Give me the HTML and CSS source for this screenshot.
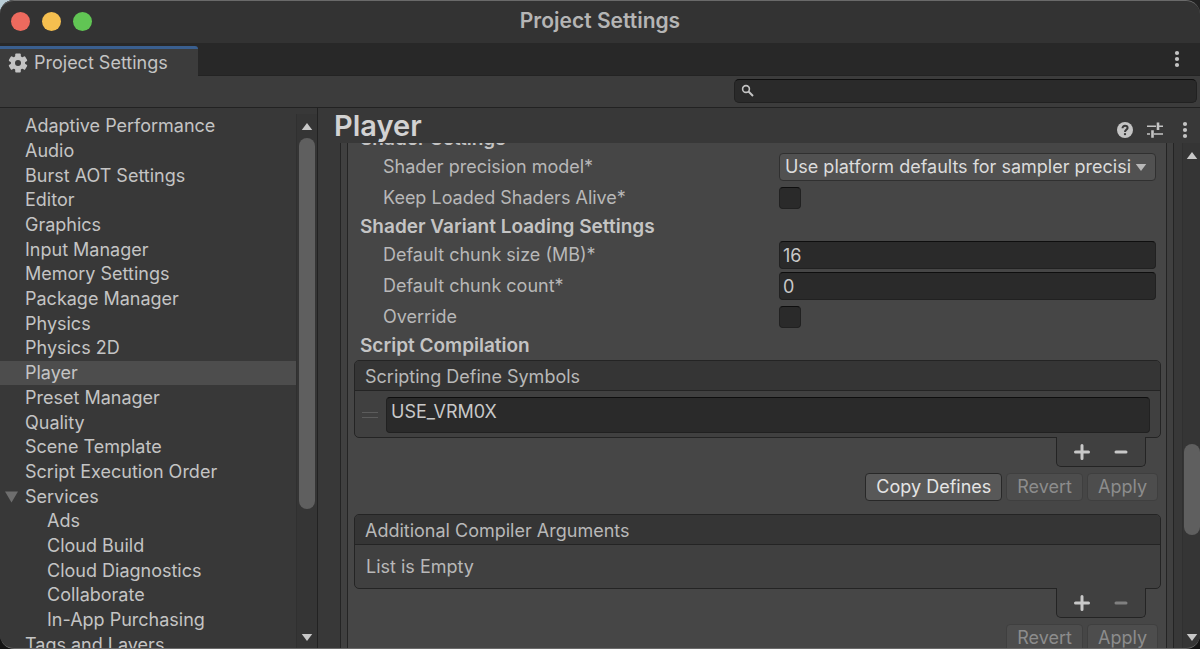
FILE: index.html
```html
<!DOCTYPE html>
<html lang="en">
<head>
<meta charset="utf-8">
<title>Project Settings</title>
<link rel="stylesheet" href="styles.css">
</head>
<body>
<div class="window">
  <header class="titlebar">
    <div class="lights">
      <button class="light light-close" aria-label="Close"></button>
      <button class="light light-min" aria-label="Minimize"></button>
      <button class="light light-zoom" aria-label="Zoom"></button>
    </div>
    <h1 class="window-title">Project Settings</h1>
  </header>

  <div class="tabbar">
    <button class="tab">
      <svg class="gear" viewBox="0 0 20 20" aria-hidden="true">
        <g fill="currentColor">
          <rect x="7.2" y="0.6" width="5.6" height="18.8" rx="1"/>
          <rect x="7.2" y="0.6" width="5.6" height="18.8" rx="1" transform="rotate(60 10 10)"/>
          <rect x="7.2" y="0.6" width="5.6" height="18.8" rx="1" transform="rotate(120 10 10)"/>
          <circle cx="10" cy="10" r="7.2"/>
        </g>
        <circle class="gear-hole" cx="10" cy="10" r="3"/>
      </svg>
      Project Settings
    </button>
    <button class="icon-button tab-menu" aria-label="Tab menu">
      <svg class="dots" viewBox="0 0 6 18" fill="currentColor"><circle cx="3" cy="3" r="2.1"/><circle cx="3" cy="9" r="2.1"/><circle cx="3" cy="15" r="2.1"/></svg>
    </button>
  </div>

  <div class="toolbar">
    <label class="search">
      <svg class="search-icon" viewBox="0 0 14 14" fill="none" stroke="currentColor"><circle cx="5" cy="5" r="3.4" stroke-width="1.6"/><path d="M7.5 7.5 12 12" stroke-width="2"/></svg>
      <input class="search-input" type="text" aria-label="Search settings">
    </label>
  </div>

  <div class="body">
    <nav class="sidebar">
      <ul class="tree">
        <li class="item">Adaptive Performance</li>
        <li class="item">Audio</li>
        <li class="item">Burst AOT Settings</li>
        <li class="item">Editor</li>
        <li class="item">Graphics</li>
        <li class="item">Input Manager</li>
        <li class="item">Memory Settings</li>
        <li class="item">Package Manager</li>
        <li class="item">Physics</li>
        <li class="item">Physics 2D</li>
        <li class="item selected">Player</li>
        <li class="item">Preset Manager</li>
        <li class="item">Quality</li>
        <li class="item">Scene Template</li>
        <li class="item">Script Execution Order</li>
        <li class="item parent"><svg class="foldout" viewBox="0 0 14 12" fill="currentColor"><path d="M0 0h14L7 12z"/></svg>Services</li>
        <li class="item child">Ads</li>
        <li class="item child">Cloud Build</li>
        <li class="item child">Cloud Diagnostics</li>
        <li class="item child">Collaborate</li>
        <li class="item child">In-App Purchasing</li>
        <li class="item">Tags and Layers</li>
      </ul>
      <div class="scrollbar side-scroll">
        <svg class="arrow" viewBox="0 0 12 8" fill="currentColor"><path d="M6 0l6 8H0z"/></svg>
        <div class="track"><div class="thumb"></div></div>
        <svg class="arrow" viewBox="0 0 12 8" fill="currentColor"><path d="M0 0h12L6 8z"/></svg>
      </div>
    </nav>

    <main class="panel">
      <div class="panel-head">
        <h2 class="panel-title">Player</h2>
        <div class="panel-actions">
          <button class="icon-button" aria-label="Help">
            <svg class="action-icon" viewBox="0 0 16 16"><circle cx="8" cy="8" r="8" fill="currentColor"/><path class="help-mark" d="M5.5 6.3C5.5 4.6 6.6 3.8 8 3.8s2.6.9 2.6 2.2C10.6 7.7 8 7.7 8 9.9"/><circle class="help-dot" cx="8" cy="12.1" r="1.2"/></svg>
          </button>
          <button class="icon-button" aria-label="Presets">
            <svg class="action-icon" viewBox="0 0 16 16" fill="none" stroke="currentColor"><path d="M0 4.2h9M12 4.2h4M0 12h3M7 12h9" stroke-width="1.4"/><path d="M11 .5V8M5.5 8.2v7.5" stroke-width="2.6"/></svg>
          </button>
          <button class="icon-button panel-menu" aria-label="More options">
            <svg class="dots" viewBox="0 0 6 18" fill="currentColor"><circle cx="3" cy="3" r="2.1"/><circle cx="3" cy="9" r="2.1"/><circle cx="3" cy="15" r="2.1"/></svg>
          </button>
        </div>
      </div>

      <div class="panel-body">
        <div class="frame">
          <div class="settings">
            <h3 class="group">Shader Settings</h3>
            <div class="row">
              <label for="precision">Shader precision model*</label>
              <div class="select-wrap">
                <select id="precision" class="select"><option>Use platform defaults for sampler precision</option></select>
                <svg class="caret" viewBox="0 0 12 8" fill="currentColor"><path d="M0 0h12L6 8z"/></svg>
              </div>
            </div>
            <div class="row">
              <label for="alive">Keep Loaded Shaders Alive*</label>
              <input id="alive" class="check" type="checkbox">
            </div>
            <h3 class="group">Shader Variant Loading Settings</h3>
            <div class="row">
              <label for="size">Default chunk size (MB)*</label>
              <input id="size" class="field" type="text" value="16">
            </div>
            <div class="row">
              <label for="count">Default chunk count*</label>
              <input id="count" class="field" type="text" value="0">
            </div>
            <div class="row">
              <label for="override">Override</label>
              <input id="override" class="check" type="checkbox">
            </div>
            <h3 class="group">Script Compilation</h3>

            <section class="list">
              <div class="list-box">
                <h4 class="list-head">Scripting Define Symbols</h4>
                <div class="list-row">
                  <span class="grip"></span>
                  <textarea class="field symbol" rows="1" aria-label="Define symbol">USE_VRM0X</textarea>
                </div>
              </div>
              <div class="list-foot">
                <button class="icon-button" aria-label="Add symbol"><svg class="sign" viewBox="0 0 16 16"><path d="M8 1.5v13M1.5 8h13"/></svg></button>
                <button class="icon-button" aria-label="Remove symbol"><svg class="sign" viewBox="0 0 16 16"><path d="M3 8h10"/></svg></button>
              </div>
              <div class="buttons">
                <button class="button">Copy Defines</button>
                <button class="button" disabled>Revert</button>
                <button class="button" disabled>Apply</button>
              </div>
            </section>

            <section class="list">
              <div class="list-box">
                <h4 class="list-head">Additional Compiler Arguments</h4>
                <p class="list-empty">List is Empty</p>
              </div>
              <div class="list-foot">
                <button class="icon-button" aria-label="Add argument"><svg class="sign" viewBox="0 0 16 16"><path d="M8 1.5v13M1.5 8h13"/></svg></button>
                <button class="icon-button" aria-label="Remove argument" disabled><svg class="sign" viewBox="0 0 16 16"><path d="M3 8h10"/></svg></button>
              </div>
              <div class="buttons">
                <button class="button" disabled>Revert</button>
                <button class="button" disabled>Apply</button>
              </div>
            </section>
          </div>
        </div>
        <div class="scrollbar main-scroll">
          <svg class="arrow" viewBox="0 0 12 8" fill="currentColor"><path d="M6 0l6 8H0z"/></svg>
          <div class="track"><div class="thumb"></div></div>
          <svg class="arrow" viewBox="0 0 12 8" fill="currentColor"><path d="M0 0h12L6 8z"/></svg>
        </div>
      </div>
    </main>
  </div>
</div>
</body>
</html>
```
FILE: styles.css
```css
* { box-sizing: border-box; }

body {
  margin: 0;
  background: linear-gradient(90deg, #b9cdd6 0 50%, #222 50%) top / 100% 50% no-repeat #141414;
  color: #c4c4c4;
  font: 18px/24px Inter, "Liberation Sans", sans-serif;
  font-optical-sizing: none;
}

h1, h2, h3, h4, p, ul { margin: 0; padding: 0; font-size: inherit; font-weight: 400; }
button, input, select, textarea { margin: 0; font: inherit; font-optical-sizing: none; color: inherit; }
button { padding: 0; border: 0; background: none; }
svg { display: block; flex: none; }

.window {
  position: relative;
  display: flex;
  flex-direction: column;
  height: 100vh;
  overflow: hidden;
  border-radius: 14px;
  background: #383838;
}
.window::after {
  content: "";
  position: absolute;
  inset: 0;
  border: solid #6a6a6a;
  border-width: 1px 0;
  border-radius: 14px;
  pointer-events: none;
}

/* Title bar */
.titlebar {
  display: grid;
  grid-template-columns: 1fr auto 1fr;
  align-items: center;
  height: 43px;
  flex: none;
  background: #333;
}
.lights { display: flex; gap: 12px; padding-left: 11px; }
.light { width: 19px; height: 19px; border-radius: 50%; }
.light-close { background: #ed6a5e; }
.light-min { background: #f5bf4f; }
.light-zoom { background: #61c554; }
.window-title { padding-bottom: 2px; color: #b5b5b5; font-size: 21px; font-weight: 600; }

/* Tabs */
.tabbar {
  display: flex;
  justify-content: space-between;
  height: 33px;
  flex: none;
  padding-top: 3px;
  background: #282828;
  border-bottom: 1px solid #232323;
}
.tab {
  display: flex;
  align-items: center;
  gap: 6px;
  height: 30px;
  padding: 0 30px 0 8px;
  border-top: 3px solid #3a5f8f;
  border-top-right-radius: 3px;
  background: #3c3c3c;
}
.gear { width: 20px; height: 20px; }
.gear-hole { fill: #3c3c3c; }
.dots { width: 6px; height: 18px; }
.icon-button { display: flex; align-items: center; justify-content: center; }
.tab-menu { padding: 0 20px 4px; }

/* Search */
.toolbar {
  display: flex;
  justify-content: flex-end;
  height: 32px;
  flex: none;
  padding: 3px 3px 4px;
  background: #3c3c3c;
  border-bottom: 1px solid #222;
}
.search {
  display: flex;
  align-items: center;
  gap: 6px;
  width: 463px;
  padding: 0 6px;
  border: 1px solid #212121;
  border-top-color: #0e0e0e;
  border-radius: 5px;
  background: #2a2a2a;
}
.search-icon { width: 14px; height: 14px; }
.search-input { flex: 1; min-width: 0; height: 20px; padding: 0; border: 0; background: none; outline: 0; }

.body { display: flex; flex: 1; min-height: 0; }

/* Sidebar */
.sidebar { display: flex; width: 318px; flex: none; border-right: 1px solid #222; }
.tree {
  display: grid;
  grid-template-rows: repeat(22, minmax(24px, 1fr));
  flex: 1;
  margin: 6px 0 -8px;
  list-style: none;
}
.item { display: flex; align-items: center; padding-left: 25px; white-space: nowrap; }
.selected { background: #4d4d4d; }
.parent { gap: 7px; padding-left: 5px; }
.foldout { width: 13px; height: 12px; color: #6e6e6e; }
.child { padding-left: 47px; }

/* Scrollbars */
.scrollbar {
  display: flex;
  flex-direction: column;
  align-items: center;
  gap: 8px;
  flex: none;
  background: #353535;
  border-left: 1px solid #303030;
}
.arrow { width: 12px; height: 7px; color: #c8c8c8; }
.track { flex: 1; width: 16px; }
.thumb { border-radius: 8px; background: #5f5f5f; }
.side-scroll { width: 21px; margin-top: 6px; padding: 9px 0 8px; }
.side-scroll .thumb { height: 76%; }
.main-scroll { width: 18px; padding: 9px 0 8px; }
.main-scroll .track { padding-top: 277px; }
.main-scroll .thumb { height: 91px; }

/* Panel */
.panel { display: flex; flex-direction: column; flex: 1; min-width: 0; }
.panel-head {
  display: flex;
  align-items: center;
  justify-content: space-between;
  height: 35px;
  flex: none;
  padding: 0 7px 0 16px;
}
.panel-title { color: #d2d2d2; font-size: 29px; font-weight: 600; line-height: 36px; }
.panel-actions { display: flex; gap: 14px; padding-top: 8px; }
.panel-menu { width: 16px; }
.action-icon { width: 16px; height: 16px; }
.help-mark { fill: none; stroke: #383838; stroke-width: 2; }
.help-dot { fill: #383838; }

.panel-body { display: flex; flex: 1; min-height: 0; padding-left: 22px; }
.frame {
  display: flex;
  flex: 1;
  min-width: 0;
  margin-right: 8px;
  padding: 0 6px;
  overflow: hidden;
  border: solid #242424;
  border-width: 0 1px;
  background: #404040;
}
.settings {
  display: flex;
  flex-direction: column;
  gap: 3px;
  flex: 1;
  min-width: 0;
  margin-top: -16px;
  padding: 0 5px 0 6px;
  border: solid #242424;
  border-width: 0 1px;
  background: #464646;
}
.settings > * { flex: none; }
.group { padding-left: 6px; font-size: 19px; font-weight: 600; line-height: 23px; }
.row {
  display: grid;
  grid-template-columns: 21fr 20fr;
  align-items: center;
  height: 28px;
  padding: 0 5px 0 29px;
  color: #b8b8b8;
}
.field {
  width: 100%;
  height: 28px;
  padding: 0 3px;
  border: 1px solid #212121;
  border-top-color: #0e0e0e;
  border-radius: 4px;
  background: #2a2a2a;
  color: #c8c8c8;
  outline: 0;
}
.check {
  appearance: none;
  width: 22px;
  height: 22px;
  border: 1px solid #212121;
  border-top-color: #0e0e0e;
  border-radius: 4px;
  background: #2a2a2a;
}
.select-wrap { position: relative; }
.select {
  display: block;
  appearance: none;
  width: 100%;
  height: 28px;
  padding: 0 24px 0 5px;
  border: 1px solid #303030;
  border-radius: 4px;
  background: #515151;
  color: #dcdcdc;
  text-overflow: clip;
}
.caret { position: absolute; top: 11px; right: 9px; width: 12px; height: 7px; pointer-events: none; }

/* Reorderable lists */
.list { margin-bottom: 10px; }
.list-box {
  border: 1px solid #242424;
  border-radius: 5px;
  background: #404040;
}
.list-head {
  padding: 4px 10px 1px;
  border-bottom: 1px solid #242424;
  border-radius: 4px 4px 0 0;
  background: #353535;
  color: #b8b8b8;
}
.list-row { display: flex; align-items: center; gap: 8px; padding: 6px 10px 4px 7px; }
.grip { width: 16px; height: 6px; border: solid #5c5c5c; border-width: 1px 0; }
.symbol { display: block; flex: 1; width: auto; height: 36px; padding: 2px 4px; overflow: hidden; resize: none; }
.list-empty { padding: 11px 11px 10px; line-height: 22px; color: #b8b8b8; }
.list-foot {
  position: relative;
  display: flex;
  justify-content: center;
  gap: 23px;
  width: 90px;
  height: 30px;
  margin: -1px 15px 0 auto;
  border: 1px solid #242424;
  border-top: 0;
  border-radius: 0 0 5px 5px;
  background: #404040;
}
.sign { width: 16px; height: 16px; fill: none; stroke: #c8c8c8; stroke-width: 3; stroke-linecap: round; }
.list-foot :disabled .sign { stroke: #808080; }
.buttons { display: flex; justify-content: flex-end; gap: 4px; padding: 6px 3px 0 0; }
.button {
  height: 28px;
  padding: 0 10px;
  border: 1px solid #282828;
  border-radius: 4px;
  background: #585858;
  color: #e4e4e4;
}
.button:disabled { border-color: #3f3f3f; background: #4d4d4d; color: #8c8c8c; }
```
